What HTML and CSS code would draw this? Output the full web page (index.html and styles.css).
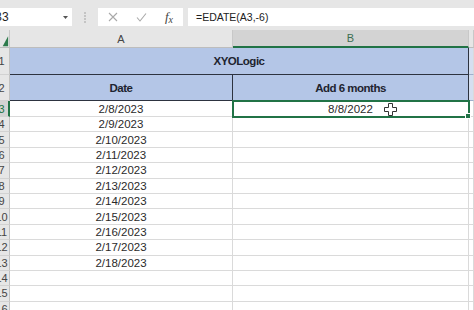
FILE: index.html
```html
<!DOCTYPE html>
<html lang="en">
<head>
    <meta charset="UTF-8">
    <title>EDATE</title>
    <link rel="stylesheet" href="styles.css">
</head>
<body>
    <div class="toolbar">
        <div class="namebox">
            <span class="ref">B3</span>
            <svg class="drop" width="5" height="3" viewBox="0 0 5 3"><path d="M0 0h5L2.5 3z" fill="#555"/></svg>
        </div>
        <div class="grip">
            <svg width="2" height="11" viewBox="0 0 2 11"><circle cx="1" cy="1" r="0.8" fill="#999"/><circle cx="1" cy="4" r="0.8" fill="#999"/><circle cx="1" cy="7" r="0.8" fill="#999"/><circle cx="1" cy="10" r="0.8" fill="#999"/></svg>
        </div>
        <div class="fbtns">
            <span class="fbtn"><svg width="10" height="10" viewBox="0 0 10 10"><path d="M1 1l8 8M9 1l-8 8" stroke="#a9a9a9" stroke-width="1.1"/></svg></span>
            <span class="fbtn"><svg width="11" height="9" viewBox="0 0 11 9"><path d="M1 4.5l3 3.5 6-7.5" stroke="#a9a9a9" stroke-width="1.1" fill="none"/></svg></span>
            <span class="fbtn fx"><i>f</i><i class="sub">x</i></span>
        </div>
        <div class="formula">=EDATE(A3,-6)</div>
    </div>

    <div class="sheet">
        <div class="row colhead">
            <div class="corner"><svg width="10" height="18" viewBox="0 0 10 18"><path d="M9 6v11H3z" fill="#2e7b4c"/></svg></div>
            <div class="ch">A</div>
            <div class="ch on">B</div>
            <div class="ch"></div>
        </div>
        <div class="row r1">
            <div class="rh"><span>1</span></div>
            <div class="c blue title">XYOLogic</div>
            <div class="c pale"></div>
        </div>
        <div class="row r2">
            <div class="rh"><span>2</span></div>
            <div class="c blue head">Date</div>
            <div class="c blue head">Add 6 months</div>
            <div class="c pale"></div>
        </div>
        <div class="row r3">
            <div class="rh on"><span>3</span></div>
            <div class="c">2/8/2023</div>
            <div class="c sel">8/8/2022
                <svg class="cursor" width="13" height="13" viewBox="0 0 13 13"><path d="M4.5 0.5h4v4h4v4h-4v4h-4v-4h-4v-4h4z" fill="#fff" stroke="#333" stroke-width="1"/></svg>
            </div>
            <div class="c"></div>
        </div>
        <div class="row"><div class="rh"><span>4</span></div><div class="c">2/9/2023</div><div class="c"></div><div class="c"></div></div>
        <div class="row"><div class="rh"><span>5</span></div><div class="c">2/10/2023</div><div class="c"></div><div class="c"></div></div>
        <div class="row"><div class="rh"><span>6</span></div><div class="c">2/11/2023</div><div class="c"></div><div class="c"></div></div>
        <div class="row"><div class="rh"><span>7</span></div><div class="c">2/12/2023</div><div class="c"></div><div class="c"></div></div>
        <div class="row"><div class="rh"><span>8</span></div><div class="c">2/13/2023</div><div class="c"></div><div class="c"></div></div>
        <div class="row"><div class="rh"><span>9</span></div><div class="c">2/14/2023</div><div class="c"></div><div class="c"></div></div>
        <div class="row"><div class="rh"><span>10</span></div><div class="c">2/15/2023</div><div class="c"></div><div class="c"></div></div>
        <div class="row"><div class="rh"><span>11</span></div><div class="c">2/16/2023</div><div class="c"></div><div class="c"></div></div>
        <div class="row"><div class="rh"><span>12</span></div><div class="c">2/17/2023</div><div class="c"></div><div class="c"></div></div>
        <div class="row"><div class="rh"><span>13</span></div><div class="c">2/18/2023</div><div class="c"></div><div class="c"></div></div>
        <div class="row"><div class="rh"><span>14</span></div><div class="c"></div><div class="c"></div><div class="c"></div></div>
        <div class="row"><div class="rh"><span>15</span></div><div class="c"></div><div class="c"></div><div class="c"></div></div>
        <div class="row"><div class="rh"><span>16</span></div><div class="c"></div><div class="c"></div><div class="c"></div></div>
    </div>
</body>
</html>
```

FILE: styles.css
```css
body {
    margin: 0;
    width: 474px;
    height: 310px;
    overflow: hidden;
    font-family: "Liberation Sans", Arial, sans-serif;
    background-color: #fff;
    color: #222;
}

/* Formula bar */
.toolbar {
    display: flex;
    height: 30px;
    padding-top: 8px;
    box-sizing: border-box;
    background-color: #e6e6e6;
}
.namebox {
    width: 72px;
    height: 18px;
    display: flex;
    align-items: center;
    background-color: #fff;
    overflow: hidden;
}
.namebox .ref {
    flex-grow: 1;
    font-size: 12px;
    margin-left: -6px;
}
.namebox .drop {
    margin-right: 4px;
}
.grip {
    width: 26px;
    height: 18px;
    display: flex;
    align-items: center;
    justify-content: center;
}
.fbtns {
    width: 85px;
    height: 18px;
    display: flex;
    background-color: #fff;
    padding-left: 1px;
    box-sizing: border-box;
}
.fbtn {
    width: 28px;
    display: flex;
    align-items: center;
    justify-content: center;
}
.fx {
    font-family: "Liberation Serif", serif;
    color: #444;
}
.fx i {
    font-size: 13px;
}
.fx .sub {
    font-size: 10px;
    margin-top: 4px;
}
.formula {
    flex-grow: 1;
    height: 18px;
    margin-left: 5px;
    padding-left: 8px;
    line-height: 18px;
    font-size: 10.5px;
    background-color: #fff;
}

/* Grid */
.row {
    display: grid;
    grid-template-columns: 10px 223px 236px 5px;
    height: 15.4px;
}
.row > div {
    box-sizing: border-box;
    display: flex;
    align-items: center;
    justify-content: center;
    overflow: hidden;
}
.colhead {
    height: 18px;
}
.r1 {
    height: 27px;
}
.r2 {
    height: 26px;
}
.r3 {
    height: 16px;
}
.corner,
.ch {
    background-color: #e6e6e6;
    border-right: 1px solid #c8c8c8;
    border-bottom: 1px solid #bdbdbd;
    font-size: 11px;
    color: #444;
}
.ch.on {
    background-color: #d3d3d3;
    border-bottom: 2px solid #217346;
    color: #3b6e50;
}
.rh {
    background-color: #e6e6e6;
    border-right: 1px solid #c2c2c2;
    border-bottom: 1px solid #d2d2d2;
    font-size: 11px;
    color: #444;
}
.row > .rh {
    justify-content: flex-start;
}
.rh span {
    flex-shrink: 0;
    width: 30px;
    margin-left: -13.5px;
    text-align: center;
}
.rh.on {
    background-color: #d3d3d3;
    border-right: 2px solid #217346;
    color: #217346;
}

.c {
    border-right: 1px solid #dadada;
    border-bottom: 1px solid #dadada;
    font-size: 11.5px;
    color: #2a2a2a;
}
.blue {
    background-color: #b4c6e7;
    border-right: 1px solid #2d3340;
    border-bottom: 1px solid #2d3340;
    font-weight: bold;
    letter-spacing: -0.5px;
    color: #1e2430;
}
.title {
    grid-column: span 2;
}
.pale {
    background-color: #d5dff0;
    border-bottom: 1px solid #9fb0cc;
}

/* Active cell */
.sel {
    position: relative;
    outline: 2px solid #217346;
    outline-offset: -1px;
    z-index: 1;
}
.row > .sel {
    overflow: visible;
}
.sel::after {
    content: "";
    position: absolute;
    right: -3px;
    bottom: -3px;
    width: 4px;
    height: 4px;
    background-color: #217346;
    border: 1px solid #fff;
}
.cursor {
    position: absolute;
    left: 151px;
    top: 2px;
}
```
